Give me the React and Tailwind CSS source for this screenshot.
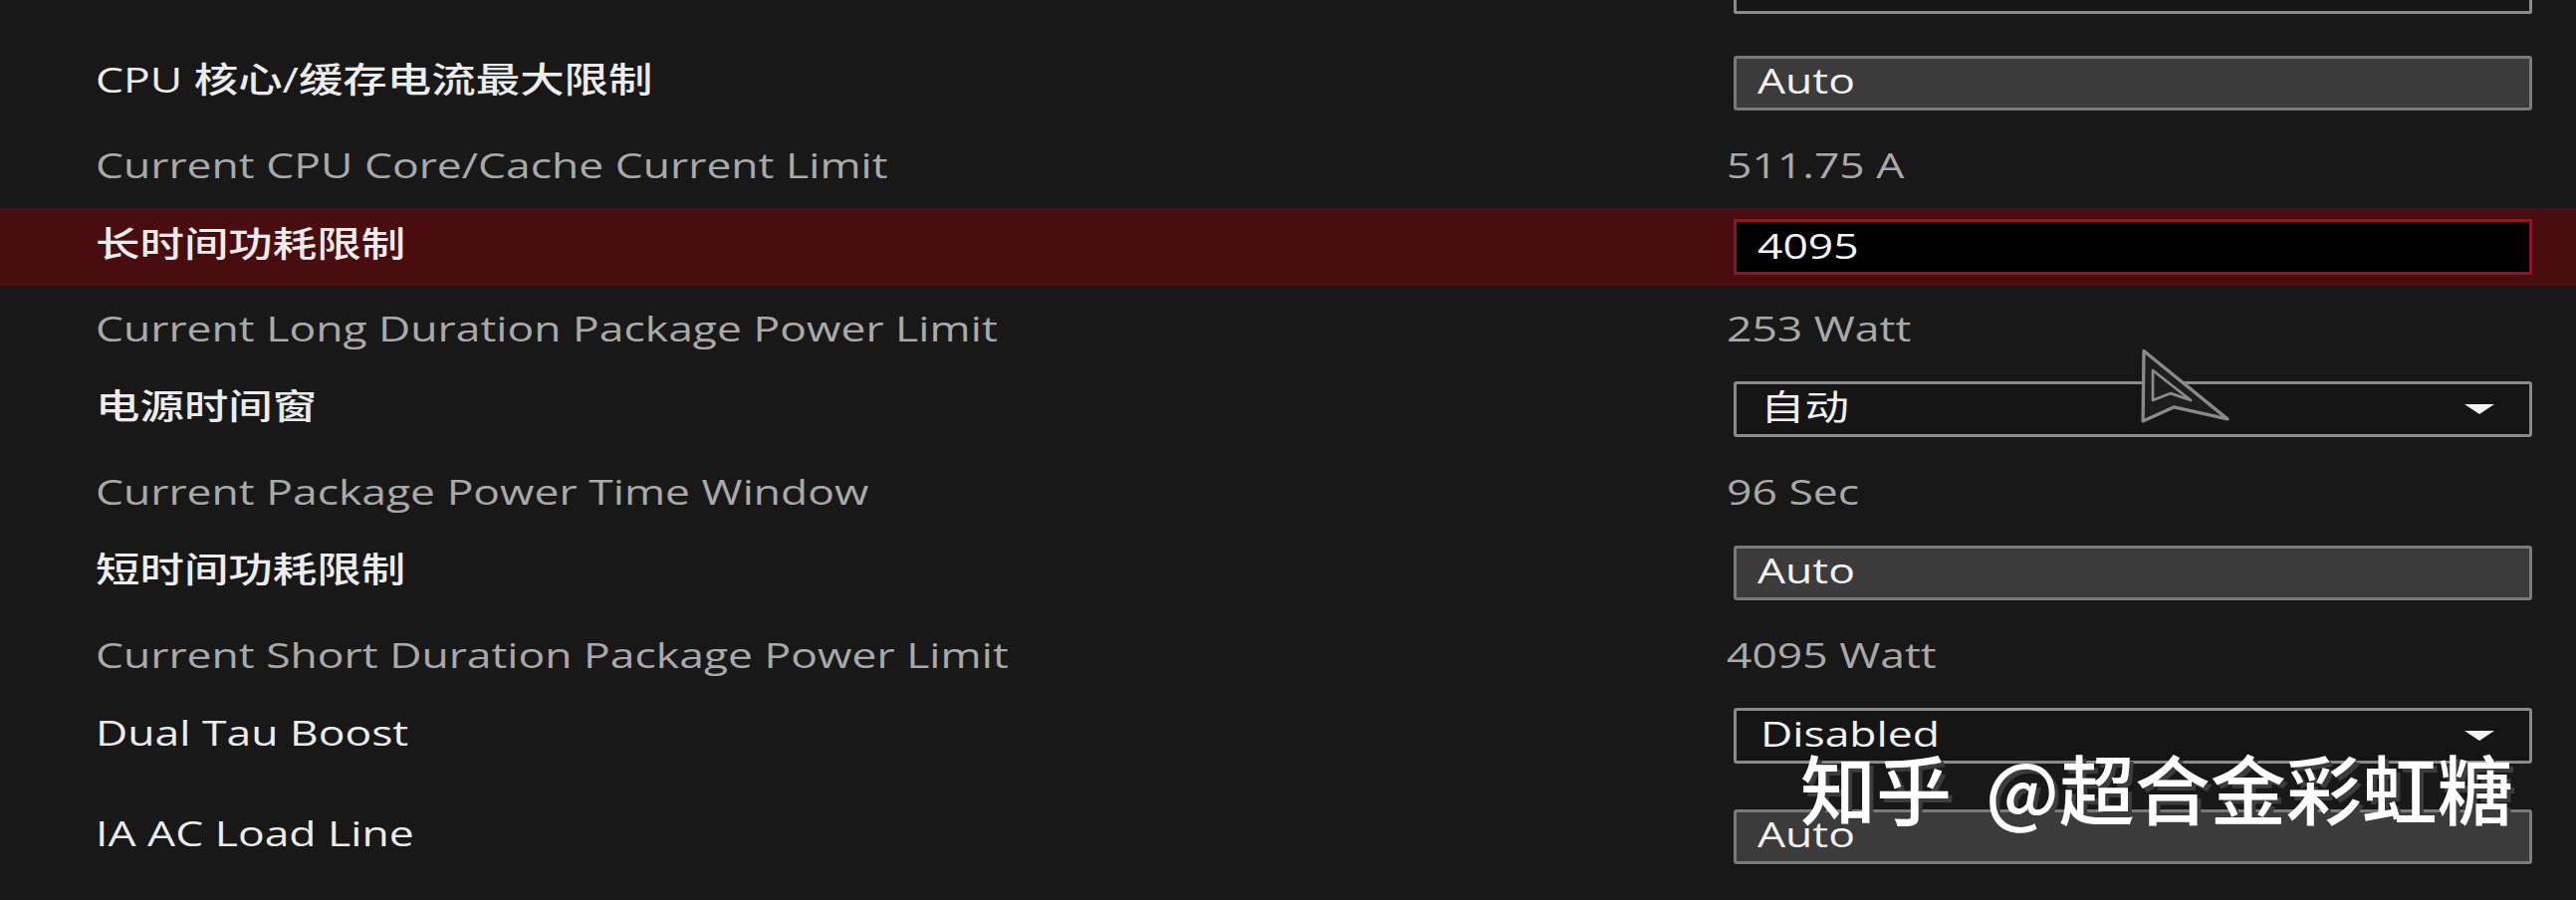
import React from "react";

const FONT = { fontFamily: '"Open Sans", "Noto Sans CJK SC", sans-serif' };

function T({ children, className = "" }) {
  return (
    <span className={"inline-block origin-left scale-x-[1.27] whitespace-nowrap " + className}>
      {children}
    </span>
  );
}

function Arrow() {
  return (
    <svg width="30" height="10" viewBox="0 0 30 10" className="absolute right-[35px] top-1/2 -translate-y-1/2">
      <polygon points="0,0 30,0 15,10" fill="#f4f4f4" />
    </svg>
  );
}

function AutoBox({ text }) {
  return (
    <div className="ml-[7px] flex h-[55px] w-[802px] items-center rounded-[3px] border-[3px] border-[#7a7a7a] bg-[#3b3b3b] pb-[5px] pl-[21px] text-[#f2f2f2]">
      <T>{text}</T>
    </div>
  );
}

function DropBox({ text }) {
  return (
    <div className="relative ml-[7px] flex h-[56px] w-[802px] items-center rounded-[3px] border-[3px] border-[#8a8a8a] bg-[#151515] pb-[5px] pl-[24px] text-[#f2f2f2]">
      <T>{text}</T>
      <Arrow />
    </div>
  );
}

function InputBox({ text }) {
  return (
    <div className="ml-[7px] flex h-[56px] w-[802px] items-center border-[3px] border-[#8e1526] bg-black pb-[3px] pl-[21px] text-[#f4f4f4]">
      <T>{text}</T>
    </div>
  );
}

function SettingRow({ label, children, className = "" }) {
  return (
    <div className={"flex h-[82px] items-center " + className}>
      <div className="flex-1 pb-[7px] pl-[96px] font-medium text-[#ececec]">
        <T>{label}</T>
      </div>
      <div className="mr-[44px] w-[809px] shrink-0">{children}</div>
    </div>
  );
}

function InfoRow({ label, value }) {
  return (
    <div className="flex h-[82px] items-center text-[#a9a9a9]">
      <div className="flex-1 pl-[96px]">
        <T>{label}</T>
      </div>
      <div className="mr-[44px] w-[809px] shrink-0">
        <T>{value}</T>
      </div>
    </div>
  );
}

function Cursor() {
  return (
    <svg
      width="240"
      height="120"
      viewBox="0 0 80 40"
      className="absolute left-[2120px] top-[330px]"
    >
      <polygon
        points="11,7.5 10.7,31 21,26.3 39,30.3"
        fill="#1d1d1d"
        stroke="#8a8a8a"
        strokeWidth="1.1"
        strokeLinejoin="round"
      />
      <polygon
        points="14,14 14,24 20,21.7 26.7,24"
        fill="none"
        stroke="#8c8c8c"
        strokeWidth="0.9"
        strokeLinejoin="round"
      />
    </svg>
  );
}

export default function App() {
  return (
    <div
      className="relative h-[904px] w-[2587px] overflow-hidden bg-[#181818] text-[35px] leading-none"
      style={FONT}
    >
      <div className="flex h-[14px]">
        <div className="flex-1" />
        <div className="mr-[44px] w-[809px] shrink-0">
          <div className="ml-[7px] h-[14px] w-[802px] rounded-b-[3px] border-x-[3px] border-b-[3px] border-[#8a8a8a] bg-[#161616]" />
        </div>
      </div>

      <div className="mt-[28px]">
        <SettingRow label="CPU 核心/缓存电流最大限制">
          <AutoBox text="Auto" />
        </SettingRow>
        <InfoRow label="Current CPU Core/Cache Current Limit" value="511.75 A" />
        <div className="mb-[1px] mt-[3px] bg-[#4a0d0f]">
          <SettingRow label="长时间功耗限制" className="!h-[78px]">
            <InputBox text="4095" />
          </SettingRow>
        </div>
        <InfoRow label="Current Long Duration Package Power Limit" value="253 Watt" />
        <SettingRow label="电源时间窗">
          <DropBox text="自动" />
        </SettingRow>
        <InfoRow label="Current Package Power Time Window" value="96 Sec" />
        <SettingRow label="短时间功耗限制">
          <AutoBox text="Auto" />
        </SettingRow>
        <InfoRow label="Current Short Duration Package Power Limit" value="4095 Watt" />
        <SettingRow label="Dual Tau Boost">
          <DropBox text="Disabled" />
        </SettingRow>
        <SettingRow label="IA AC Load Line" className="mt-[19px]">
          <AutoBox text="Auto" />
        </SettingRow>
      </div>

      <Cursor />

      <div
        className="absolute left-[1808px] top-[752px] flex whitespace-nowrap text-[76px] font-medium leading-none text-white [text-shadow:4px_4px_0_#3c3c3c]"
        style={{ fontFamily: '"Noto Sans CJK SC", sans-serif' }}
      >
        <span>知乎</span>
        <span className="ml-[34px]">@超合金彩虹糖</span>
      </div>
    </div>
  );
}
